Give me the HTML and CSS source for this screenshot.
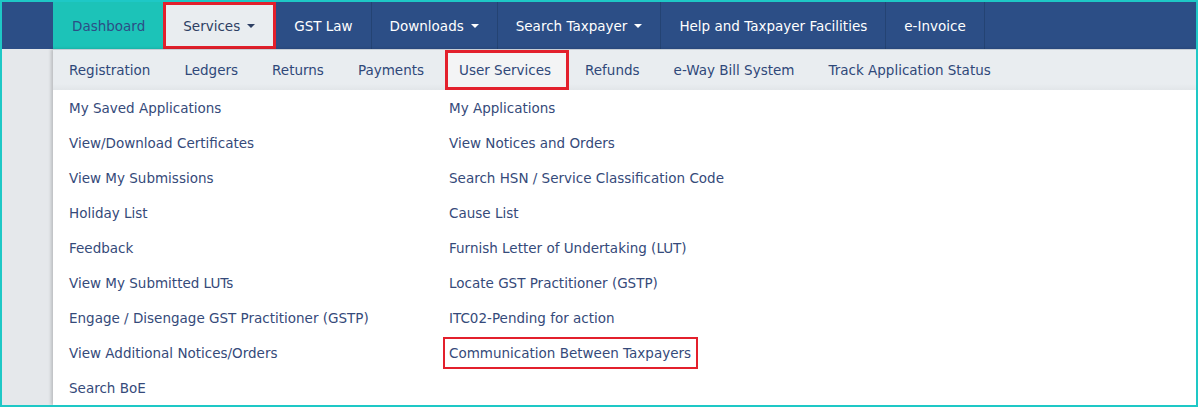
FILE: index.html
```html
<!DOCTYPE html>
<html lang="en">
<head>
    <meta charset="UTF-8">
    <meta name="viewport" content="width=device-width, initial-scale=1.0">
    <title>GST Portal - User Services</title>
    <link rel="stylesheet" href="styles.css">
</head>
<body>
    <div class="frame">
        <nav class="topNav">
            <ul>
                <li class="active"><a href="#">Dashboard</a></li>
                <li class="open marked"><a href="#">Services <span class="caret"></span></a></li>
                <li><a href="#">GST Law</a></li>
                <li><a href="#">Downloads <span class="caret"></span></a></li>
                <li><a href="#">Search Taxpayer <span class="caret"></span></a></li>
                <li><a href="#">Help and Taxpayer Facilities</a></li>
                <li><a href="#">e-Invoice</a></li>
            </ul>
        </nav>
        <div class="lower">
            <div class="gutter"></div>
            <div class="menu">
                <ul class="subNav">
                    <li><a href="#">Registration</a></li>
                    <li><a href="#">Ledgers</a></li>
                    <li><a href="#">Returns</a></li>
                    <li><a href="#">Payments</a></li>
                    <li class="marked current"><a href="#">User Services</a></li>
                    <li><a href="#">Refunds</a></li>
                    <li><a href="#">e-Way Bill System</a></li>
                    <li><a href="#">Track Application Status</a></li>
                </ul>
                <div class="dropdown">
                    <ul class="column">
                        <li><a href="#">My Saved Applications</a></li>
                        <li><a href="#">View/Download Certificates</a></li>
                        <li><a href="#">View My Submissions</a></li>
                        <li><a href="#">Holiday List</a></li>
                        <li><a href="#">Feedback</a></li>
                        <li><a href="#">View My Submitted LUTs</a></li>
                        <li><a href="#">Engage / Disengage GST Practitioner (GSTP)</a></li>
                        <li><a href="#">View Additional Notices/Orders</a></li>
                        <li><a href="#">Search BoE</a></li>
                    </ul>
                    <ul class="column">
                        <li><a href="#">My Applications</a></li>
                        <li><a href="#">View Notices and Orders</a></li>
                        <li><a href="#">Search HSN / Service Classification Code</a></li>
                        <li><a href="#">Cause List</a></li>
                        <li><a href="#">Furnish Letter of Undertaking (LUT)</a></li>
                        <li><a href="#">Locate GST Practitioner (GSTP)</a></li>
                        <li><a href="#">ITC02-Pending for action</a></li>
                        <li><a href="#" class="boxed">Communication Between Taxpayers</a></li>
                    </ul>
                </div>
            </div>
        </div>
    </div>
</body>
</html>
```

FILE: styles.css
```css
* {
    margin: 0;
    padding: 0;
    box-sizing: border-box;
}
body {
    font-family: "DejaVu Sans", Verdana, sans-serif;
    font-size: 13.5px;
    background-color: #ffffff;
}
ul {
    list-style: none;
}
a {
    text-decoration: none;
}
.frame {
    width: 1198px;
    height: 407px;
    border: 2px solid #1ec8c6;
    overflow: hidden;
    display: flex;
    flex-direction: column;
}
.topNav {
    height: 47px;
    background-color: #2c4e86;
    padding-left: 51px;
}
.topNav ul {
    display: flex;
    height: 100%;
}
.topNav li {
    border-right: 1px solid #244373;
}
.topNav li a {
    display: flex;
    align-items: center;
    height: 100%;
    padding: 0 18px;
    color: #ffffff;
}
.topNav li.active {
    background-color: #1cc3b8;
    border-right: none;
}
.topNav li.active a {
    color: #2c4e86;
    padding: 0 18px 0 19px;
}
.topNav li.open {
    background-color: #e9edf0;
}
.topNav li.open a {
    color: #2d3f63;
    padding: 0 20px;
}
.caret {
    display: inline-block;
    width: 0;
    height: 0;
    margin-left: 7px;
    border-left: 4px solid transparent;
    border-right: 4px solid transparent;
    border-top: 4px solid currentColor;
}
.marked {
    outline: 3px solid #e3202c;
    outline-offset: -3px;
}
.lower {
    flex: 1;
    display: flex;
    background-color: #e5e8eb;
}
.gutter {
    width: 51px;
}
.menu {
    flex: 1;
    display: flex;
    flex-direction: column;
    box-shadow: -2px 0 3px rgba(0, 0, 0, 0.18);
}
.subNav {
    display: flex;
    height: 41px;
    background: linear-gradient(#e9edf0 85%, #e2e6e9);
    border-top: 1px solid #c7ced6;
}
.subNav li a {
    display: flex;
    align-items: center;
    height: 100%;
    padding: 0 18px 0 16px;
    color: #2f4879;
}
.subNav li.current {
    background-color: #f3f4f5;
    margin-left: 3px;
}
.subNav li.current a {
    padding: 0 18px 0 14px;
}
.dropdown {
    flex: 1;
    display: flex;
    background-color: #ffffff;
    padding-left: 16px;
}
.column {
    width: 380px;
}
.column li {
    height: 35px;
    display: flex;
    align-items: center;
}
.column a {
    color: #354a7a;
}
.column a.boxed {
    border: 2px solid #e3202c;
    padding: 6px 5px 6px 4px;
    margin-left: -6px;
}
```
